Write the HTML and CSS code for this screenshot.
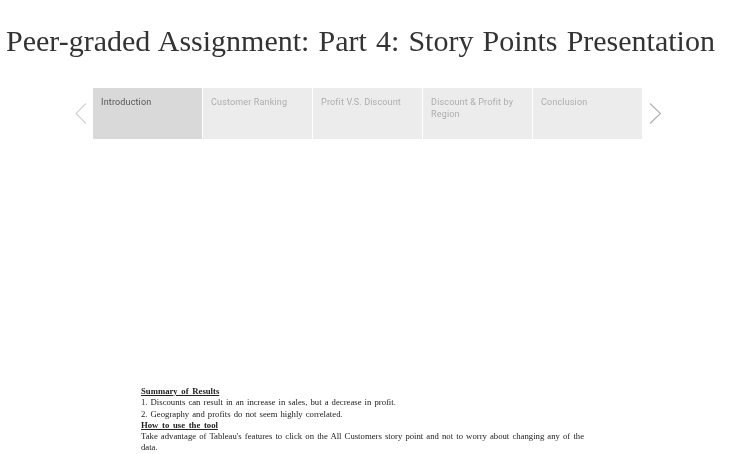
FILE: index.html
```html
<!DOCTYPE html>
<html lang="en">
<head>
<meta charset="utf-8">
<title>Story Points Presentation</title>
<link rel="stylesheet" href="styles.css">
</head>
<body>
<main class="story">
  <h1 class="title">Peer-graded Assignment: Part 4: Story Points Presentation</h1>
  <nav class="nav">
    <svg class="arrow" viewBox="0 0 12 24" width="12" height="24" aria-hidden="true"><path d="M11 1.500 1 11.500l10 10" class="arrow-line-faint"/></svg>
    <div class="tabs">
      <div class="tab tab-active">Introduction</div>
      <div class="tab">Customer Ranking</div>
      <div class="tab">Profit V.S. Discount</div>
      <div class="tab">Discount &amp; Profit by Region</div>
      <div class="tab">Conclusion</div>
    </div>
    <svg class="arrow" viewBox="0 0 12 24" width="12" height="24" aria-hidden="true"><path d="M1 1.500l10.500 10-10.500 10" class="arrow-line"/></svg>
  </nav>
  <section class="notes">
    <p class="heading">Summary of Results</p>
    <p>1. Discounts can result in an increase in sales, but a decrease in profit.</p>
    <p>2. Geography and profits do not seem highly correlated.</p>
    <p class="heading">How to use the tool</p>
    <p class="justified">Take advantage of Tableau's features to click on the All Customers story point and not to worry about changing any of the data.</p>
  </section>
</main>
</body>
</html>
```
FILE: styles.css
```css
* { box-sizing: border-box; }
html, body { margin: 0; padding: 0; background: #fff; }
body { width: 736px; height: 454px; overflow: hidden; }
.story { display: flex; flex-direction: column; height: 454px; filter: blur(0.35px); }
.title {
  margin: 0; padding: 22px 0 0 6px; height: 88px;
  font: 400 30px/38px "Liberation Serif", serif;
  word-spacing: 1.6px; color: #333; white-space: nowrap;
}
.nav { display: flex; align-items: center; padding-left: 74.5px; height: 51px; }
.tabs { display: flex; gap: 1px; margin: 0 7px 0 6.8px; height: 51px; }
.tab {
  width: 109px; padding: 8px 7.8px; background: #ececec; color: #adadad;
  font: 9px/12px "Roboto", sans-serif; letter-spacing: 0.15px;
}
.tab-active { background: #d9d9d9; color: #555; }
.arrow { flex: none; }
.arrow path { fill: none; stroke-width: 1.2; }
.arrow-line { stroke: #b0b0b0; }
.arrow-line-faint { stroke: #d2d2d2; }
.notes {
  margin: 247px 0 0 141px; width: 443px;
  font: 8.7px/11.3px "Liberation Serif", serif; color: #222;
  word-spacing: 0.9px;
}
.notes p { margin: 0; }
.notes .heading { font-weight: 700; text-decoration: underline; word-spacing: 1.5px; }
.justified { text-align: justify; }
```
